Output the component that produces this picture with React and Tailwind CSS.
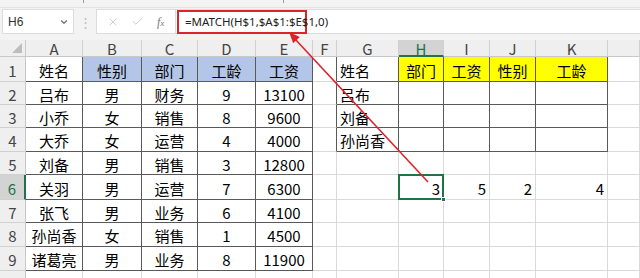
import { ChevronDown, X, Check } from 'lucide-react'

const COLS = ['', 'A', 'B', 'C', 'D', 'E', 'F', 'G', 'H', 'I', 'J', 'K', '']

const LEFT = [
  ['姓名', '性别', '部门', '工龄', '工资'],
  ['吕布', '男', '财务', '9', '13100'],
  ['小乔', '女', '销售', '8', '9600'],
  ['大乔', '女', '运营', '4', '4000'],
  ['刘备', '男', '销售', '3', '12800'],
  ['关羽', '男', '运营', '7', '6300'],
  ['张飞', '男', '业务', '6', '4100'],
  ['孙尚香', '女', '销售', '1', '4500'],
  ['诸葛亮', '男', '业务', '8', '11900'],
]

const RIGHT_HEAD = ['部门', '工资', '性别', '工龄']
const RIGHT_NAMES = ['吕布', '刘备', '孙尚香']
const MATCHES = ['3', '5', '2', '4']

// inside one of the two bordered tables
function boxed(r, c) {
  if (r >= 1 && r <= 9 && c >= 1 && c <= 5) return true
  if (r >= 1 && r <= 4 && c >= 7 && c <= 11) return true
  return false
}

function cellInfo(r, c) {
  if (r >= 1 && r <= 9 && c >= 1 && c <= 5) {
    const fill = r === 1 && c >= 2 ? 'blue' : null
    return { text: LEFT[r - 1][c - 1], align: 'center', fill }
  }
  if (r === 1 && c === 7) return { text: '姓名', align: 'left' }
  if (r === 1 && c >= 8 && c <= 11) return { text: RIGHT_HEAD[c - 8], align: 'center', fill: 'yellow' }
  if (r >= 2 && r <= 4 && c === 7) return { text: RIGHT_NAMES[r - 2], align: 'left' }
  if (r === 6 && c >= 8 && c <= 11) return { text: MATCHES[c - 8], align: 'right' }
  return { text: '', align: 'left' }
}

function Cell({ r, c }) {
  const { text, align, fill } = cellInfo(r, c)
  const rightDark = boxed(r, c) || boxed(r, c + 1)
  const bottomDark = boxed(r, c) || boxed(r + 1, c)
  const selected = r === 6 && c === 8
  return (
    <div
      className={`relative flex items-center border-r border-b text-[15px] leading-none text-black ${
        rightDark ? 'border-r-[#595959]' : 'border-r-[#d9d9d9]'
      } ${bottomDark ? 'border-b-[#595959]' : 'border-b-[#d9d9d9]'} ${
        fill === 'blue' ? 'bg-[#b4c6e7]' : fill === 'yellow' ? 'bg-[#ffff00]' : 'bg-white'
      } ${
        align === 'center' ? 'justify-center' : align === 'right' ? 'justify-end pr-[3px]' : 'justify-start pl-[3px]'
      }`}
    >
      <span className="pt-[2px] whitespace-nowrap">{text}</span>
      {selected && (
        <>
          <div className="absolute -left-px -top-px -right-px -bottom-px border-2 border-[#217346] z-10 pointer-events-none" />
          <div className="absolute -right-[3px] -bottom-[3px] w-[5px] h-[5px] bg-[#217346] border border-white z-20" />
        </>
      )}
    </div>
  )
}

function ColHeader({ c }) {
  if (c === 0) {
    return (
      <div className="relative bg-[#efefef] border-r border-b border-[#c8c8c8]">
        <svg className="absolute right-[3px] bottom-[3px]" width="10" height="10" viewBox="0 0 10 10">
          <polygon points="10,0 10,10 0,10" fill="#bdbdbd" />
        </svg>
      </div>
    )
  }
  const active = c === 8
  return (
    <div
      className={`flex items-center justify-center border-r border-[#d0d0d0] text-[15px] leading-none ${
        active
          ? 'bg-[#d3d3d3] text-[#217346] border-b-2 border-b-[#217346]'
          : 'bg-[#efefef] text-[#444] border-b border-b-[#c8c8c8]'
      }`}
    >
      <span className="pt-[1px]">{COLS[c]}</span>
    </div>
  )
}

function RowHeader({ r }) {
  const active = r === 6
  return (
    <div
      className={`flex items-center justify-center border-b border-[#d0d0d0] text-[15px] leading-none ${
        active
          ? 'bg-[#d3d3d3] text-[#217346] border-r-2 border-r-[#217346]'
          : 'bg-[#efefef] text-[#444] border-r border-r-[#c8c8c8]'
      }`}
    >
      {/* row 10 sits below the window edge, its number is not visible */}
      <span className="pt-[2px]">{r <= 9 ? r : ''}</span>
    </div>
  )
}

function FormulaBar() {
  return (
    <div className="bg-[#f3f3f3] h-[40px] flex flex-col">
      <div className="h-[8px] relative border-b border-[#e2e2e2]">
        <span className="absolute left-[83px] top-0 w-px h-[3px] bg-[#9a9a9a]" />
        <span className="absolute left-[283px] top-0 w-px h-[3px] bg-[#9a9a9a]" />
      </div>
      <div className="flex items-center h-[25px] mt-[1px] pl-[2px]">
        <div className="w-[72px] h-full bg-white border border-[#dcdcdc] flex items-center justify-between pl-[5px] pr-[4px] text-[12px] text-[#333] font-['Liberation_Sans',sans-serif]">
          <span>H6</span>
          <ChevronDown size={10} strokeWidth={3} className="text-[#777]" />
        </div>
        <div className="w-[22px] flex justify-center text-[#bbb] text-[13px] leading-none">⋮</div>
        <div className="w-[80px] h-full bg-white border border-[#dcdcdc] flex items-center gap-[12px] pl-[10px] text-[#c0c0c0]">
          <X size={12} strokeWidth={1.5} />
          <Check size={13} strokeWidth={1.5} />
          <span className="ml-[1px] italic text-[12px] text-[#777] font-['Liberation_Serif',serif]">
            f<span className="text-[9px]">x</span>
          </span>
        </div>
        <div className="flex-1 h-full bg-white border-y border-[#dcdcdc] flex items-center pl-px">
          <div className="h-[24px] w-[130px] border-2 border-[#d9262c] flex items-center pl-[6px] text-[11.5px] text-[#222] font-['Noto_Sans',sans-serif] whitespace-nowrap">
            =MATCH(H$1,$A$1:$E$1,0)
          </div>
        </div>
      </div>
    </div>
  )
}

export default function App() {
  const rows = Array.from({ length: 11 }, (_, i) => i)
  const cols = Array.from({ length: 13 }, (_, i) => i)
  return (
    <div className="relative w-[640px] h-[278px] overflow-hidden bg-white font-['Noto_Sans_CJK_SC','Noto_Sans',sans-serif]">
      <FormulaBar />
      <div className="grid grid-cols-[26px_57px_59px_56px_58px_57px_24px_62px_45px_46px_46px_72px_1fr] grid-rows-[17px_25px_23px_23px_24px_23px_25px_23px_24px_24px_24px]">
        {rows.map((r) =>
          cols.map((c) => {
            if (r === 0) return <ColHeader key={`${r}-${c}`} c={c} />
            if (c === 0) return <RowHeader key={`${r}-${c}`} r={r} />
            return <Cell key={`${r}-${c}`} r={r} c={c} />
          })
        )}
      </div>
      <svg className="absolute inset-0 pointer-events-none z-30" width="640" height="278" viewBox="0 0 640 278">
        <line x1="428" y1="182" x2="295" y2="39" stroke="#e0202a" strokeWidth="1.6" />
        <polygon points="289,32 293.2,43.2 299.8,37" fill="#e0202a" />
      </svg>
    </div>
  )
}
